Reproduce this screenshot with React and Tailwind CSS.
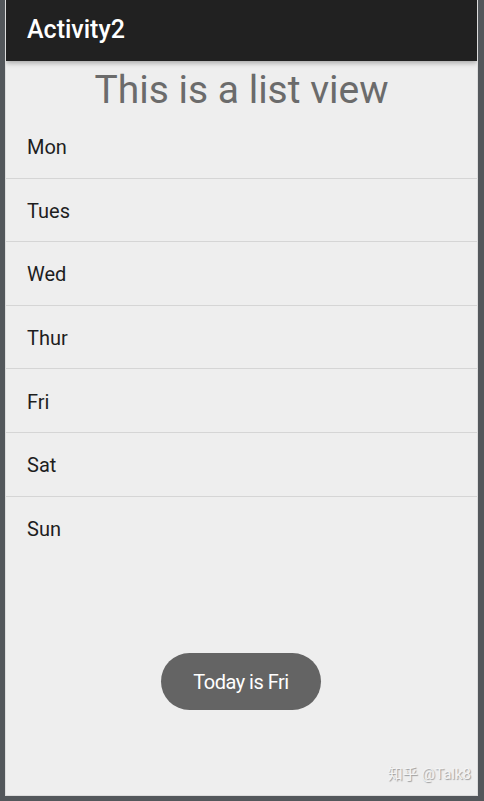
import React from "react";

const days = ["Mon", "Tues", "Wed", "Thur", "Fri", "Sat", "Sun"];

const App = () => {
  return (
    <div
      className="w-[484px] h-[801px] bg-[#53575b] pl-[5px] pr-[6px] pb-[5px]"
      style={{ fontFamily: "Roboto, 'Noto Sans CJK SC', sans-serif" }}
    >
      <div className="relative h-full border-x border-b border-[#dcdcdc] bg-[#eeeeee] overflow-hidden">
        {/* app bar */}
        <header className="relative z-10 h-[61px] bg-[#212121] pl-[21px] flex items-center shadow-[0_2px_5px_rgba(0,0,0,0.3)]">
          <h1 className="text-[25px] font-medium text-white leading-none pb-[2px]">Activity2</h1>
        </header>

        <div className="h-[54px] flex items-center justify-center">
          <p className="text-[39px] text-[#6b6b6b] leading-none pt-[4px]">This is a list view</p>
        </div>

        <ul>
          {days.map((day, i) => (
            <li
              key={day}
              className={
                "h-[63.6px] flex items-center pl-[21px] pt-[2px] text-[20px] text-[#1e1e1e] " +
                (i < days.length - 1 ? "border-b border-[#d5d5d5]" : "")
              }
            >
              {day}
            </li>
          ))}
        </ul>

        {/* toast */}
        <div className="absolute left-[155px] top-[653px] w-[160px] h-[57px] rounded-full bg-[#646464] flex items-center justify-center">
          <span className="text-[20px] text-white tracking-[-0.5px]">Today is Fri</span>
        </div>

        <div
          className="absolute right-[6px] bottom-[10px] text-[15px] text-[#f4f4f4]"
          style={{ textShadow: "1px 1px 1px rgba(0,0,0,0.35)" }}
        >
          知乎 @Talk8
        </div>
      </div>
    </div>
  );
};

export default App;
